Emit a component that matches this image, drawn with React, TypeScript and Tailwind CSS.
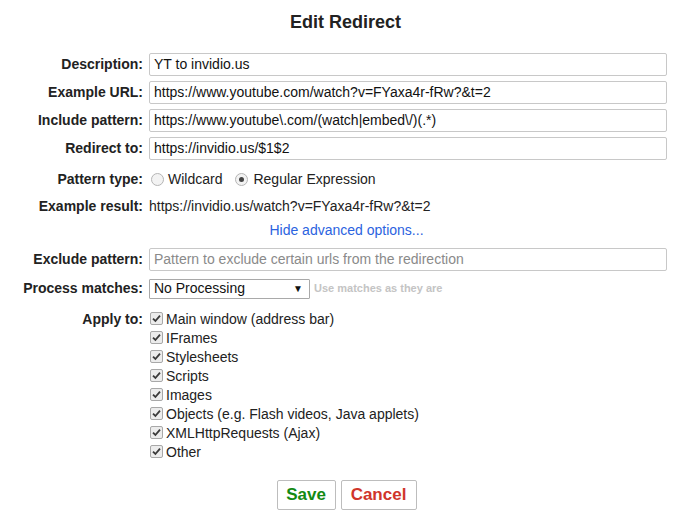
import React from 'react';

const font = { fontFamily: '"Liberation Sans", Arial, sans-serif' };

function Label({ children }: { children: React.ReactNode }) {
  return <div className="w-[143px] shrink-0 text-right font-bold text-[#222]">{children}</div>;
}

function TextBox({ value, placeholder }: { value?: string; placeholder?: string }) {
  return (
    <div className="ml-[6px] flex h-[23px] flex-1 items-center rounded-[2px] border border-[#c8c8c8] bg-white px-[4px]">
      {value ? (
        <span className="whitespace-nowrap text-[#111]">{value}</span>
      ) : (
        <span className="whitespace-nowrap text-[#8a8a8a]">{placeholder}</span>
      )}
    </div>
  );
}

function Radio({ checked }: { checked?: boolean }) {
  return (
    <span className="flex h-[13px] w-[13px] items-center justify-center rounded-full border border-[#b5b5b5] bg-[#f3f3f3]">
      {checked && <span className="h-[5px] w-[5px] rounded-full bg-[#444]" />}
    </span>
  );
}

function Check() {
  return (
    <span className="flex h-[13px] w-[13px] shrink-0 items-center justify-center rounded-[2px] border border-[#a8a8a8] bg-[#ececec]">
      <svg width="9" height="9" viewBox="0 0 9 9">
        <path d="M1 4.6 L3.4 7 L8 1.6" fill="none" stroke="#3a3a3a" strokeWidth="1.8" />
      </svg>
    </span>
  );
}

const applyTo = [
  'Main window (address bar)',
  'IFrames',
  'Stylesheets',
  'Scripts',
  'Images',
  'Objects (e.g. Flash videos, Java applets)',
  'XMLHttpRequests (Ajax)',
  'Other',
];

export default function App() {
  return (
    <div className="h-[515px] w-[691px] bg-white text-[14px] text-[#222]" style={font}>
      <h1 className="pt-[12px] text-center text-[18px] font-bold leading-[21px] text-[#222]">Edit Redirect</h1>

      <div className="mt-[17px] flex flex-col pr-[24px]">
        <div className="flex h-[28px] items-center">
          <Label>Description:</Label>
          <TextBox value="YT to invidio.us" />
        </div>
        <div className="flex h-[28px] items-center">
          <Label>Example URL:</Label>
          <TextBox value="https://www.youtube.com/watch?v=FYaxa4r-fRw?&t=2" />
        </div>
        <div className="flex h-[28px] items-center">
          <Label>Include pattern:</Label>
          <TextBox value="https://www.youtube\.com/(watch|embed\/)(.*)" />
        </div>
        <div className="flex h-[28px] items-center">
          <Label>Redirect to:</Label>
          <TextBox value="https://invidio.us/$1$2" />
        </div>

        <div className="flex h-[34px] items-center">
          <Label>Pattern type:</Label>
          <div className="ml-[8px] flex items-center">
            <Radio />
            <span className="ml-[4px]">Wildcard</span>
            <span className="ml-[13px]" />
            <Radio checked />
            <span className="ml-[5px]">Regular Expression</span>
          </div>
        </div>

        <div className="flex h-[20px] items-center">
          <Label>Example result:</Label>
          <span className="ml-[6px]">https://invidio.us/watch?v=FYaxa4r-fRw?&t=2</span>
        </div>

        <div className="flex h-[28px] items-center justify-center pl-[26px]">
          <a className="text-[#2b63e0]">Hide advanced options...</a>
        </div>

        <div className="flex h-[31px] items-center">
          <Label>Exclude pattern:</Label>
          <TextBox placeholder="Pattern to exclude certain urls from the redirection" />
        </div>

        <div className="flex h-[27px] items-center">
          <Label>Process matches:</Label>
          <div className="ml-[6px] flex h-[20px] w-[161px] items-center justify-between rounded-[1px] border border-[#a9a9a9] bg-white pl-[4px] pr-[6px]">
            <span className="text-[#111]">No Processing</span>
            <span className="text-[10px] text-[#111]">▼</span>
          </div>
          <span className="ml-[4px] text-[11px] font-bold text-[#c4c4c4]">Use matches as they are</span>
        </div>

        <div className="mt-[7px] flex items-start">
          <Label>
            <span className="leading-[19px]">Apply to:</span>
          </Label>
          <div className="ml-[7px] flex flex-col">
            {applyTo.map((item) => (
              <div key={item} className="flex h-[19px] items-center">
                <Check />
                <span className="ml-[3px] mt-[2px] leading-[19px]">{item}</span>
              </div>
            ))}
          </div>
        </div>
      </div>

      <div className="mt-[19px] flex justify-center gap-[5px] pl-[2px]">
        <button className="h-[30px] w-[59px] rounded-[2px] border border-[#bdbdbd] bg-white text-[17px] font-bold text-[#138a13]">
          Save
        </button>
        <button className="h-[30px] w-[76px] rounded-[2px] border border-[#bdbdbd] bg-white text-[17px] font-bold text-[#d0352b]">
          Cancel
        </button>
      </div>
    </div>
  );
}
